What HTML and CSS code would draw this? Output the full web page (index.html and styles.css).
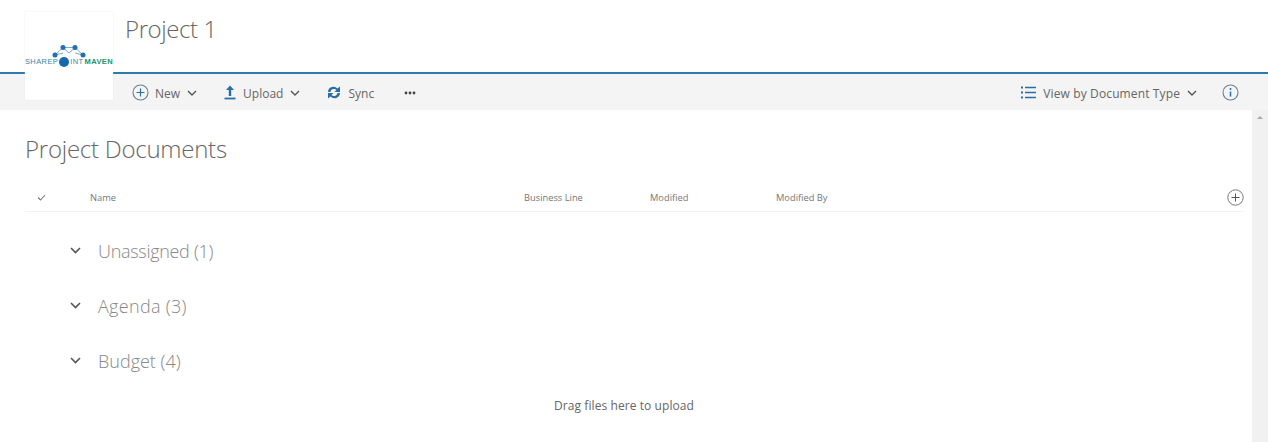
FILE: index.html
```html
<!DOCTYPE html>
<html lang="en">
<head>
<meta charset="utf-8">
<title>Project 1</title>
<link rel="stylesheet" href="styles.css">
</head>
<body>
<header class="site-head">
  <div class="logo">
    <svg class="logo-net" width="36" height="17" viewBox="0 0 36 17" aria-hidden="true">
      <path d="M4 11 L12 3.500 L24 3.500 L32 11 M12 3.500 L18 9 L24 3.500 M4 11 L12 9 M32 11 L24 9" fill="none" stroke="#6f9fca" stroke-width="0.9"/>
      <circle cx="4" cy="11" r="2.500" fill="#1f6fb2"/>
      <circle cx="12" cy="3.500" r="2.500" fill="#1f6fb2"/>
      <circle cx="24" cy="3.500" r="2.500" fill="#1f6fb2"/>
      <circle cx="32" cy="11" r="2.500" fill="#1f6fb2"/>
    </svg>
    <div class="logo-word"><span class="lw-blue">SHAREP</span><span class="lw-dot"></span><span class="lw-blue">INT</span><span class="lw-green">MAVEN</span></div>
  </div>
  <h1 class="site-title">Project 1</h1>
</header>
<nav class="toolbar">
  <div class="cmds">
    <button class="cmd">
      <svg class="ic ic-new" width="17" height="17" viewBox="0 0 17 17"><circle cx="8.500" cy="8.500" r="7.500" fill="none" stroke="#6d7f92" stroke-width="1.100"/><path d="M8.500 4.500v8M4.500 8.500h8" stroke="#2f6ea5" stroke-width="1.200"/></svg>
      <span>New</span>
      <svg class="chev" width="10" height="6" viewBox="0 0 10 6"><path d="M1 1l4 4 4-4" fill="none" stroke="#555" stroke-width="1.400"/></svg>
    </button>
    <button class="cmd">
      <svg class="ic" width="12" height="15" viewBox="0 0 12 15"><path d="M6 0.500L2 5h2.800v6h2.400V5H10z" fill="#2b6ea6"/><path d="M0.500 13.500h11" stroke="#2b6ea6" stroke-width="1.800"/></svg>
      <span>Upload</span>
      <svg class="chev" width="10" height="6" viewBox="0 0 10 6"><path d="M1 1l4 4 4-4" fill="none" stroke="#555" stroke-width="1.400"/></svg>
    </button>
    <button class="cmd">
      <svg class="ic" width="14" height="13" viewBox="0 0 14 13"><path d="M1 6A5.500 5.500 0 0 1 10.500 2.500L13 0.500V6H7.500L9.500 4A3.500 3.500 0 0 0 3.500 6z" fill="#2b6ea6"/><path d="M13 7A5.500 5.500 0 0 1 3.500 10.500L1 12.500V7H6.500L4.500 9A3.500 3.500 0 0 0 10.500 7z" fill="#2b6ea6"/></svg>
      <span>Sync</span>
    </button>
    <button class="cmd more" aria-label="More">
      <svg width="12" height="4" viewBox="0 0 12 4"><circle cx="2" cy="2" r="1.400" fill="#444"/><circle cx="6" cy="2" r="1.400" fill="#444"/><circle cx="10" cy="2" r="1.400" fill="#444"/></svg>
    </button>
  </div>
  <div class="cmds-right">
    <button class="cmd">
      <svg class="ic ic-view" width="15" height="13" viewBox="0 0 15 13"><path d="M4 1.500h11M4 6.500h11M4 11.500h11" stroke="#2b6ea6" stroke-width="1.600"/><path d="M0 1.500h2M0 6.500h2M0 11.500h2" stroke="#2b6ea6" stroke-width="2"/></svg>
      <span class="wide">View by Document Type</span>
      <svg class="chev" width="10" height="6" viewBox="0 0 10 6"><path d="M1 1l4 4 4-4" fill="none" stroke="#555" stroke-width="1.400"/></svg>
    </button>
    <button class="cmd info" aria-label="Info">
      <svg width="17" height="17" viewBox="0 0 17 17"><circle cx="8.500" cy="8.500" r="7.500" fill="none" stroke="#6d8296" stroke-width="1.100"/><circle cx="8.500" cy="5" r="1" fill="#2b6ea6"/><path d="M8.500 7.500v5" stroke="#2b6ea6" stroke-width="1.500"/></svg>
    </button>
  </div>
</nav>
<div class="body-wrap">
  <main class="content">
    <h2 class="list-title">Project Documents</h2>
    <div class="col-head">
      <svg class="col-check" width="9" height="7" viewBox="0 0 9 7"><path d="M1 3.500l2.500 2.500L8 1" fill="none" stroke="#777" stroke-width="1.100"/></svg>
      <span class="col col-name">Name</span>
      <span class="col col-line">Business Line</span>
      <span class="col col-mod">Modified</span>
      <span class="col col-by">Modified By</span>
      <svg class="col-add" width="17" height="17" viewBox="0 0 17 17"><circle cx="8.500" cy="8.500" r="7.700" fill="none" stroke="#777" stroke-width="1"/><path d="M8.500 4.500v8M4.500 8.500h8" stroke="#555" stroke-width="1"/></svg>
    </div>
    <div class="groups">
      <div class="group group-tight"><svg class="g-chev" width="11" height="7" viewBox="0 0 11 7"><path d="M1 1l4.500 4.500L10 1" fill="none" stroke="#555" stroke-width="1.600"/></svg><span>Unassigned (1)</span></div>
      <div class="group group-loose"><svg class="g-chev" width="11" height="7" viewBox="0 0 11 7"><path d="M1 1l4.500 4.500L10 1" fill="none" stroke="#555" stroke-width="1.600"/></svg><span>Agenda (3)</span></div>
      <div class="group"><svg class="g-chev" width="11" height="7" viewBox="0 0 11 7"><path d="M1 1l4.500 4.500L10 1" fill="none" stroke="#555" stroke-width="1.600"/></svg><span>Budget (4)</span></div>
    </div>
    <p class="drop">Drag files here to upload</p>
  </main>
  <aside class="scroll"><span class="scroll-up"></span></aside>
</div>
</body>
</html>
```
FILE: styles.css
```css
* { box-sizing: border-box; }
html, body { margin: 0; height: 100%; overflow: hidden; }
body {
  position: relative;
  display: flex;
  flex-direction: column;
  background: #fff;
  font-family: "Open Sans", "Noto Sans", "Liberation Sans", sans-serif;
  color: #444;
}
.site-head {
  height: 74px;
  flex: none;
  border-bottom: 2px solid #2b7cac;
  padding: 13px 0 0 125px;
}
.site-title {
  margin: 0;
  font-size: 24px;
  line-height: 32px;
  font-weight: 300;
  letter-spacing: -0.400px;
  color: #666;
}
.logo {
  position: absolute;
  left: 25px;
  top: 12px;
  width: 88px;
  height: 88px;
  background: #fff;
  box-shadow: 0 0 1px #ddd;
  display: flex;
  flex-direction: column;
  align-items: center;
  padding-top: 32px;
}
.logo-net { margin-bottom: -4px; }
.logo-word {
  display: flex;
  align-items: center;
  font-family: "Liberation Sans", sans-serif;
  font-size: 7.500px;
  line-height: 10px;
  letter-spacing: 0.400px;
  white-space: nowrap;
}
.lw-blue { color: #3a86a8; }
.lw-green { color: #23936a; font-weight: 700; margin-left: 1px; }
.lw-dot { width: 10px; height: 10px; border-radius: 50%; background: #1668ad; margin: 0 1px; }
.toolbar {
  height: 36px;
  flex: none;
  background: #f4f4f4;
  display: flex;
  align-items: center;
  justify-content: space-between;
  padding: 1px 29px 0 132px;
}
.cmds, .cmds-right { display: flex; align-items: center; }
.cmd {
  display: flex;
  align-items: center;
  padding: 0;
  border: 0;
  background: none;
  font: inherit;
  font-size: 12px;
  color: #666;
  white-space: nowrap;
}
.cmd span { padding-top: 2px; }
.cmd .wide { letter-spacing: 0.120px; }
.cmd .ic { margin-right: 7px; }
.cmd .ic-new { margin-right: 6px; }
.cmd .ic-view { margin-right: 7px; }
.cmd .chev { margin-left: 7px; }
.cmds .cmd { margin-right: 27px; }
.cmds .cmd.more { margin-left: 3px; }
.cmds-right .cmd.info { margin-left: 25px; }
.body-wrap { flex: 1; display: flex; min-height: 0; }
.content { flex: 1; min-width: 0; padding: 0 8px 0 25px; }
.list-title {
  margin: 22px 0 0;
  font-size: 24px;
  line-height: 34px;
  font-weight: 300;
  letter-spacing: -0.250px;
  color: #666;
}
.col-head {
  position: relative;
  height: 36px;
  margin-top: 10px;
  padding-top: 8px;
  border-bottom: 1px solid #f3f3f3;
  display: flex;
  align-items: center;
  font-size: 9.300px;
  color: #777;
}
.col-check { margin-left: 12px; }
.col-name { margin-left: 44px; width: 434px; }
.col-line { width: 126px; }
.col-mod { width: 126px; }
.col-add { position: absolute; right: 0; top: 13px; }
.groups { padding: 11px 0 0 45px; }
.group {
  display: flex;
  align-items: center;
  height: 55px;
  font-size: 18px;
  font-weight: 300;
  color: #888;
}
.group-tight { letter-spacing: -0.300px; }
.group-loose { letter-spacing: 0.300px; }
.g-chev { margin-right: 17px; }
.drop {
  margin: 9px 0 0;
  padding-left: 529px;
  font-size: 12px;
  line-height: 18px;
  letter-spacing: 0.080px;
  color: #666;
}
.scroll { width: 16px; flex: none; background: #f1f1f1; position: relative; }
.scroll-up {
  position: absolute;
  left: 5px;
  top: 6px;
  border-left: 3px solid transparent;
  border-right: 3px solid transparent;
  border-bottom: 3px solid #aaa;
}
```
